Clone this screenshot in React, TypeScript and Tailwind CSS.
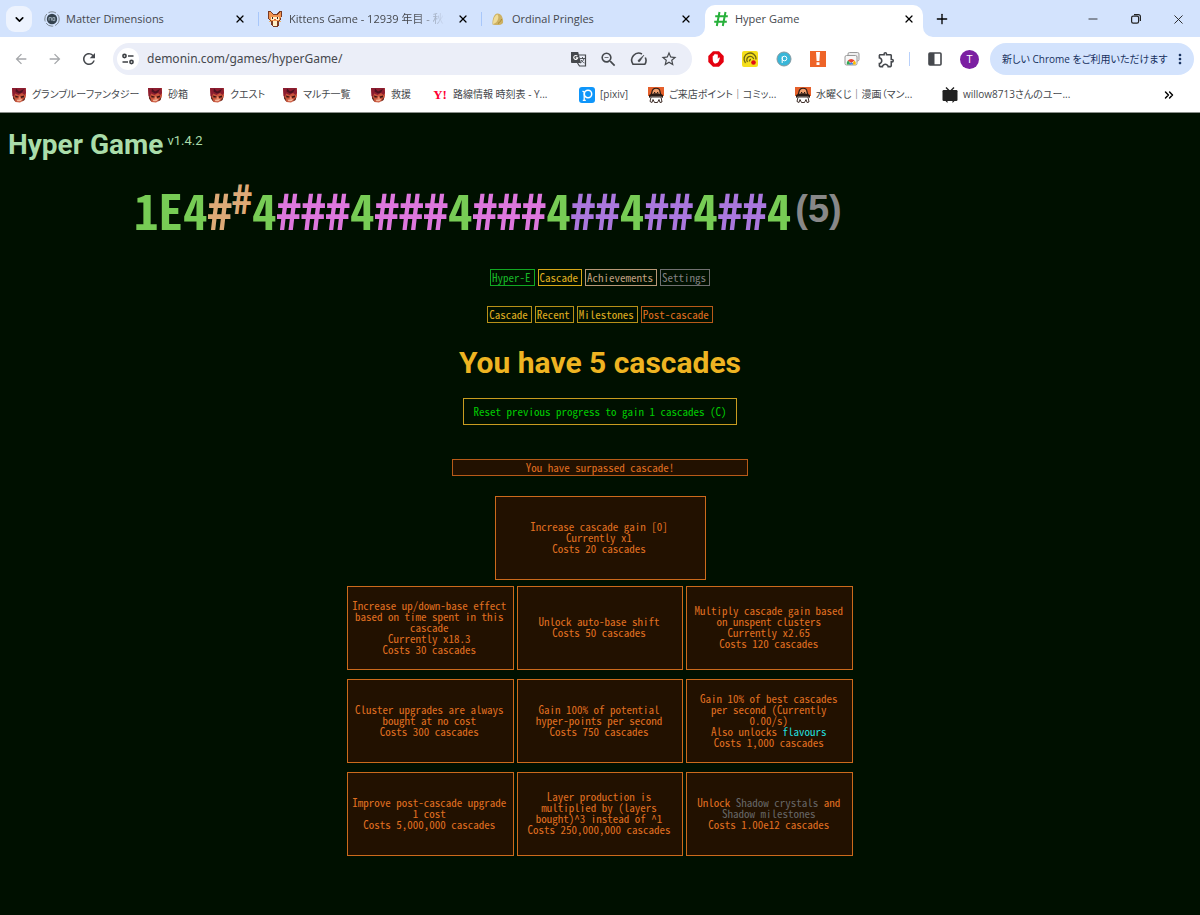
import type { ReactNode } from 'react';
import clsx from 'clsx';
import {
  MdArrowBack,
  MdArrowForward,
  MdMoreVert,
  MdOutlineExtension,
  MdRefresh,
  MdStarBorder,
  MdZoomOut,
} from 'react-icons/md';
import { ChevronDown, ChevronsRight, Minus, Plus, X } from 'lucide-react';

function MatterIcon() {
  return (
    <svg viewBox="0 0 16 16" className="size-4 shrink-0">
      <circle cx="8" cy="8" r="7.2" fill="none" stroke="#7d8790" strokeWidth="1" strokeDasharray="8 2" />
      <circle cx="8" cy="8" r="5.2" fill="#34424e" />
      <path d="M5 9.6V6.6h2.4v3M8.800 6.600h2v3h-2z" fill="none" stroke="#a9b8c4" strokeWidth="0.9" />
    </svg>
  );
}

function KittenIcon() {
  return (
    <svg viewBox="0 0 16 16" className="size-4 shrink-0" shapeRendering="crispEdges">
      <path d="M1 0h3l2 3h4l2-3h3v5l-1 3-2 2v4l-2 2H6l-2-2v-4L2 9 1 6z" fill="#7a3a24" />
      <path d="M2 1h1l3 3h4l3-3h1v5l-1 3-2 1H5L3 9 2 6z" fill="#f09450" />
      <path d="M4 6h8v3H4zM6 10h4v5H6z" fill="#fff0c8" />
      <path d="M5 6h1v2H5zM10 6h1v2h-1z" fill="#3a2018" />
      <path d="M7 8h2v1H7z" fill="#d8553c" />
      <path d="M2 10h2v1H2zM12 10h2v1h-2z" fill="#f0b060" />
    </svg>
  );
}

function PringleIcon() {
  return (
    <svg viewBox="0 0 16 16" className="size-4 shrink-0">
      <path d="M2.500 13.500C2 9 4 2.500 7.500 2.500c4 0 6 5 5.500 9.500-2 2.500-6.500 2.500-10.500 1.500z" fill="#cdb163" />
      <path d="M3 13C3 8 5 4 7.500 3.500c1.500 1.500 1 5-1 7.500-1 1-2.500 1.800-3.500 2z" fill="#f0dc98" />
      <path d="M8 12.500c1.500-1 3-2.500 3.600-4.500" fill="none" stroke="#a9882f" />
    </svg>
  );
}

function HashIcon() {
  return (
    <svg viewBox="0 0 16 16" className="size-4 shrink-0">
      <path d="M6.500 1 3.800 15M12.500 1 9.800 15M2.200 5.300h12.600M1.200 10.700h12.600" fill="none" stroke="#27b03a" strokeWidth="2" />
    </svg>
  );
}

function FantasyIcon() {
  return (
    <svg viewBox="0 0 16 16" className="size-4 shrink-0">
      <path d="M1 1h14v8l-1.500 4L9 15.500 4.500 15 2 11z" fill="#c9553c" />
      <path d="M1 1h13.500l.5 5-1.500 2L11 6 7.500 8 4 6.500 3 10 1.500 9z" fill="#8c1d30" />
      <path d="m5 1.500 3 3 5-2.500-2 3.500-3 1-3.500-2z" fill="#4d1220" />
      <path d="M4 8.600 7.500 9.500v1H4.500zM9.500 9.500l3.500-1v1.700l-3 .8z" fill="#401612" />
      <path d="M8 9.500h1.200l.8 2.500H7.500z" fill="#eb8a68" />
      <path d="m5.500 12.800 6-.8-2 2.300H6.500z" fill="#f3b69a" />
      <path d="M2 9.500 3.500 11l1 4L2 11.500zM12.500 12l1.800-2-.8 3-2.500 1.500z" fill="#5c2c22" />
    </svg>
  );
}

function PixivIcon() {
  return (
    <span className="flex size-4 shrink-0 items-center justify-center rounded-[3px] bg-[#0f96fa]">
      <svg viewBox="0 0 16 16" className="size-4">
        <circle cx="9" cy="7" r="3.700" fill="none" stroke="#fff" strokeWidth="1.500" />
        <path d="M3.500 4.200 5.200 5v8.500M3.800 13.300h3" fill="none" stroke="#fff" strokeWidth="1.300" />
      </svg>
    </span>
  );
}

function YahooIcon() {
  return (
    <span className="w-4 shrink-0 text-center font-['Liberation_Serif',serif] text-[13px] leading-4 font-bold text-[#ff0033]">
      Y!
    </span>
  );
}

function ComicIcon() {
  return (
    <svg viewBox="0 0 16 16" className="size-4 shrink-0">
      <path d="M0 0h16v9H0z" fill="#e5602b" />
      <path d="M4 5c0-5 8-5 8 0l1 3H3z" fill="#f0a070" stroke="#2b1a14" strokeWidth="1.200" />
      <path d="M1 8c4-2.500 10-2.500 14 0v3l-2-1.500H3L1 11z" fill="#2b1a14" />
      <path d="M3 10h10l1 5-2 .5-1-3-1.500 3h-3L5 12.500 4 15.500l-2-1z" fill="#fff" stroke="#2b1a14" strokeWidth="0.900" />
      <path d="M6 5.500h1.200M9 5.500h1.200" stroke="#2b1a14" />
    </svg>
  );
}

function TvIcon() {
  return (
    <svg viewBox="0 0 16 16" className="size-4 shrink-0">
      <path d="M4 .5 7.500 4M12 .5 8.500 4" stroke="#222" strokeWidth="1.400" />
      <rect x="0.500" y="3" width="15" height="11" rx="1.200" fill="#222" />
      <path d="M3 13.500h2.500V16zM10.500 13.500H13L10.500 16z" fill="#222" />
    </svg>
  );
}

function SiteInfoIcon() {
  return (
    <svg viewBox="0 0 14 14" className="size-[14px]" fill="none" stroke="#3c3f43" strokeWidth="1.600">
      <circle cx="3.500" cy="4" r="1.600" />
      <path d="M7 4h5.500M1.500 10H7" />
      <circle cx="10.500" cy="10" r="1.600" />
    </svg>
  );
}

function TranslateIcon() {
  return (
    <svg viewBox="0 0 16 16" className="size-4" fill="none">
      <path d="M7.500 4h7v11H8.500L6.500 12" stroke="#45484d" strokeWidth="1.200" />
      <path d="M9 7.500h5M11.500 6v1.500M13 7.500c-.5 2-2 3.500-3.500 4.500M10.200 9c.8 1.500 2 2.500 3.300 3" stroke="#45484d" strokeWidth="0.900" />
      <path d="M0 1h7.200L10 12H1.200C.5 12 0 11.500 0 11z" fill="#45484d" />
      <path d="M6.300 5.200A2 2 0 1 0 6.700 6.900H4.800" stroke="#fff" strokeWidth="1.100" />
    </svg>
  );
}

function GaugeIcon() {
  return (
    <svg viewBox="0 0 18 18" className="size-[18px]" fill="none" stroke="#45484d" strokeWidth="1.600">
      <path d="M12 4A7 7 0 0 0 3 14.200h12A7 7 0 0 0 15.300 7.500" strokeLinejoin="round" />
      <path d="M8.200 10.200 14 5l-4.200 6.500c-1 .9-2.300-.3-1.600-1.300z" fill="#45484d" strokeWidth="0.500" />
    </svg>
  );
}

function RestoreIcon() {
  return (
    <svg viewBox="0 0 12 12" className="size-3" fill="none" stroke="#222" strokeWidth="1.200">
      <rect x="1.600" y="3.200" width="7" height="7" rx="1.600" />
      <path d="M4 1.600h4.400a2 2 0 0 1 2 2V8" />
    </svg>
  );
}

const extensions: { name: string; icon: ReactNode }[] = [
  {
    name: 'Ad blocker',
    icon: (
      <svg viewBox="0 0 16 16" className="size-4">
        <path d="M5 .3h6L15.700 5v6L11 15.700H5L.3 11V5z" fill="#e4000f" />
        <path
          d="M4.700 8V5.200c0-.9 1.200-.9 1.200 0V4c0-.9 1.300-.9 1.300 0v-.6c0-.9 1.300-.9 1.300 0V4c0-.9 1.300-.9 1.300 0v4l.8-1.200c.6-.8 1.500-.3 1.200.5-.6 1.700-1 3.200-1.900 4.300-.8 1-3 1.100-3.900.3-1-.9-1.300-2.400-1.300-3.900z"
          fill="#fff"
        />
      </svg>
    ),
  },
  {
    name: 'Radar',
    icon: (
      <svg viewBox="0 0 16 16" className="size-4">
        <rect width="16" height="16" rx="2" fill="#f5df1c" />
        <path d="M3.500 12A6 6 0 1 1 14 8.500M5.500 11a3.500 3.500 0 1 1 6.200-2.800" fill="none" stroke="#6d6414" strokeWidth="1.300" />
        <path d="M7.500 10.500a1.500 1.500 0 0 1 1.500-2" fill="none" stroke="#6d6414" strokeWidth="1.300" />
        <circle cx="11.500" cy="11.500" r="2.300" fill="#e10d17" />
      </svg>
    ),
  },
  {
    name: 'Pixiv tool',
    icon: (
      <svg viewBox="0 0 16 16" className="size-4">
        <circle cx="8" cy="8" r="7" fill="#38b6d8" stroke="#8799a0" />
        <circle cx="8.500" cy="7.500" r="2.300" fill="none" stroke="#fff" />
        <path d="M6.200 5.500v6.500" stroke="#fff" />
      </svg>
    ),
  },
  {
    name: 'Alert',
    icon: (
      <svg viewBox="0 0 16 16" className="size-4">
        <path d="M0 0h16v16H0z" fill="#ee6428" />
        <path d="M6 1h4l-.6 9H6.600zM6.500 11.300h3V14h-3z" fill="#fff" />
      </svg>
    ),
  },
  {
    name: 'Screens',
    icon: (
      <svg viewBox="0 0 16 16" className="size-4">
        <rect x="4" y="1.500" width="11" height="8.500" rx="1.500" fill="#eee" stroke="#999" />
        <rect x="1" y="4.500" width="12" height="9.500" rx="1.500" fill="#f7f7f7" stroke="#999" />
        <path d="M2.800 13.500a4.500 4.500 0 0 1 1.300-4.200L7 13.500z" fill="#34a853" />
        <path d="M3.800 9.500a4.500 4.500 0 0 1 6.800 0L7.300 12z" fill="#ea4335" />
        <path d="M10.600 9.500a4.500 4.500 0 0 1 1.200 4H7.500z" fill="#fbbc04" />
        <path d="M5.300 13.500a2 2 0 0 1 4 0z" fill="#4285f4" />
      </svg>
    ),
  },
  { name: 'Extensions', icon: <MdOutlineExtension size={19} /> },
];

const tabs = [
  { title: 'Matter Dimensions', icon: <MatterIcon /> },
  { title: 'Kittens Game - 12939 年目 - 秋季', icon: <KittenIcon />, fade: true },
  { title: 'Ordinal Pringles', icon: <PringleIcon /> },
  { title: 'Hyper Game', icon: <HashIcon />, active: true },
];

const bookmarks = [
  { label: 'グランブルーファンタジー', icon: <FantasyIcon />, width: 'w-[136px]' },
  { label: '砂箱', icon: <FantasyIcon />, width: 'w-[62px]' },
  { label: 'クエスト', icon: <FantasyIcon />, width: 'w-[73px]' },
  { label: 'マルチ一覧', icon: <FantasyIcon />, width: 'w-[88px]' },
  { label: '救援', icon: <FantasyIcon />, width: 'w-[62px]' },
  { label: '路線情報 時刻表 - Y...', icon: <YahooIcon />, width: 'w-[147px]' },
  { label: '[pixiv]', icon: <PixivIcon />, width: 'w-[69px]' },
  { label: 'ご来店ポイント｜コミッ...', icon: <ComicIcon />, width: 'w-[147px]' },
  { label: '水曜くじ｜漫画（マン...', icon: <ComicIcon />, width: 'w-[147px]' },
  { label: 'willow8713さんのユー...', icon: <TvIcon />, width: 'w-[147px]' },
];

function TabStrip() {
  return (
    <div className="flex h-[37px] items-end bg-[#d3e3fd]">
      <button aria-label="Search tabs" className="mb-[5px] ml-1.5 flex size-[26px] items-center justify-center rounded-[9px] bg-[#edf3fe]">
        <ChevronDown size={13} strokeWidth={3} />
      </button>
      <div className="ml-1 flex">
        {tabs.map((tab, i) => (
          <div
            key={tab.title}
            className={clsx(
              'relative flex h-8 items-center pb-1 pl-2',
              tab.active ? 'w-[218px] rounded-t-[10px] bg-white' : 'w-[223px]'
            )}
          >
            {tab.active && (
              <>
                <svg viewBox="0 0 10 10" className="absolute bottom-0 -left-2.5 size-2.5">
                  <path d="M10 0v10H0A10 10 0 0 0 10 0z" fill="#fff" />
                </svg>
                <svg viewBox="0 0 10 10" className="absolute -right-2.5 bottom-0 size-2.5">
                  <path d="M0 0v10h10A10 10 0 0 1 0 0z" fill="#fff" />
                </svg>
              </>
            )}
            {tab.icon}
            <span
              className={clsx(
                'ml-1.5 w-[156px] overflow-hidden text-[11px] whitespace-nowrap text-[#45484d]',
                tab.fade && 'mask-r-from-80%'
              )}
            >
              {tab.title}
            </span>
            <button aria-label={`Close ${tab.title}`} className="ml-2.5 flex size-4 items-center justify-center">
              <X size={12} strokeWidth={2.5} />
            </button>
            {i < 2 && <span className="ml-2.5 h-3.5 w-px bg-[#a8c7fa]" />}
          </div>
        ))}
      </div>
      <button aria-label="New tab" className="mb-2.5 ml-[11px]">
        <Plus size={16} />
      </button>
      <div className="mb-2.5 ml-auto flex text-[#222]">
        <button aria-label="Minimize" className="flex h-4 w-[43px] items-center justify-center">
          <Minus size={14} strokeWidth={1.5} />
        </button>
        <button aria-label="Restore" className="flex h-4 w-[43px] items-center justify-center">
          <RestoreIcon />
        </button>
        <button aria-label="Close window" className="flex h-4 w-[43px] items-center justify-center">
          <X size={15} strokeWidth={1.5} />
        </button>
      </div>
    </div>
  );
}

function Toolbar() {
  return (
    <div className="flex h-11 items-center bg-white pr-1.5 pl-1 text-[#45484d]">
      <button aria-label="Back" className="flex w-[34px] justify-center text-[#a5a7aa]">
        <MdArrowBack size={16} />
      </button>
      <button aria-label="Forward" className="flex w-[34px] justify-center text-[#a5a7aa]">
        <MdArrowForward size={16} />
      </button>
      <button aria-label="Reload" className="flex w-[34px] justify-center">
        <MdRefresh size={18} />
      </button>
      <div className="ml-[7px] flex h-8 flex-1 items-center rounded-full bg-[#ebeef8] pr-3.5 pl-1">
        <button aria-label="Site information" className="flex size-[22px] items-center justify-center rounded-full bg-white">
          <SiteInfoIcon />
        </button>
        <input
          aria-label="Address"
          defaultValue="demonin.com/games/hyperGame/"
          className="ml-2 min-w-0 flex-1 bg-transparent font-['Noto_Sans',sans-serif] text-[12px] text-[#45484d] outline-none"
        />
        <div className="flex items-center gap-3">
          <button aria-label="Translate"><TranslateIcon /></button>
          <button aria-label="Zoom"><MdZoomOut size={19} /></button>
          <button aria-label="Performance"><GaugeIcon /></button>
          <button aria-label="Bookmark"><MdStarBorder size={18} /></button>
        </div>
      </div>
      <div className="ml-[7px] flex">
        {extensions.map((ext) => (
          <button key={ext.name} aria-label={ext.name} className="flex w-[34px] items-center justify-center">
            {ext.icon}
          </button>
        ))}
      </div>
      <span className="ml-1.5 h-3.5 w-px bg-[#b9d1fb]" />
      <button aria-label="Side panel" className="ml-2 flex w-[34px] justify-center">
        <svg viewBox="0 0 16 16" className="size-4">
          <rect x="2" y="2" width="12" height="12" rx="1" fill="none" stroke="currentColor" strokeWidth="1.600" />
          <path d="M2 2h5.500v12H2z" fill="currentColor" />
        </svg>
      </button>
      <button className="ml-2 flex size-[19px] items-center justify-center rounded-full bg-[#7b1fa2] text-[11px] text-white">T</button>
      <button className="ml-[11px] flex h-8 items-center gap-1 rounded-full bg-[#d3e3fd] pr-1.5 pl-3 text-[#16305e]">
        <span className="w-[166px] text-left text-[10px] whitespace-nowrap">新しい Chrome をご利用いただけます</span>
        <MdMoreVert size={16} />
      </button>
    </div>
  );
}

function BookmarksBar() {
  return (
    <div className="flex h-8 items-center border-b border-[#8a8f8a] bg-white pb-1 pl-[11px]">
      {bookmarks.map((mark) => (
        <a key={mark.label} href="#" className={clsx('flex shrink-0 items-center gap-[5px] text-[10px] text-[#45484d]', mark.width)}>
          {mark.icon}
          <span className="whitespace-nowrap">{mark.label}</span>
        </a>
      ))}
      <button aria-label="More bookmarks" className="mr-6 ml-auto">
        <ChevronsRight size={14} strokeWidth={2.5} />
      </button>
    </div>
  );
}

const green = 'text-[#77cc55]';
const tan = 'text-[#ddaa77]';
const pink = 'text-[#dd77dd]';
const purple = 'text-[#aa77dd]';

const numberParts = [
  { text: '4', color: green },
  { text: '###', color: pink },
  { text: '4', color: green },
  { text: '###', color: pink },
  { text: '4', color: green },
  { text: '###', color: pink },
  { text: '4', color: green },
  { text: '##', color: purple },
  { text: '4', color: green },
  { text: '##', color: purple },
  { text: '4', color: green },
  { text: '##', color: purple },
  { text: '4', color: green },
];

const mainTabs = [
  { label: 'Hyper-E', style: 'border-[#11a822] text-[#18b828]' },
  { label: 'Cascade', style: 'border-[#d8a818] text-[#e0b020]' },
  { label: 'Achievements', style: 'border-[#b89878] text-[#c0a080]' },
  { label: 'Settings', style: 'border-[#707070] text-[#808080]' },
];

const subTabs = [
  { label: 'Cascade', style: 'border-[#b89018] text-[#e0b020]' },
  { label: 'Recent', style: 'border-[#b89018] text-[#e0b020]' },
  { label: 'Milestones', style: 'border-[#b89018] text-[#e0b020]' },
  { label: 'Post-cascade', style: 'border-[#b85a18] text-[#e07020]' },
];

const upgrades: ReactNode[][] = [
  ['Increase up/down-base effect', 'based on time spent in this', 'cascade', 'Currently x18.3', 'Costs 30 cascades'],
  ['Unlock auto-base shift', 'Costs 50 cascades'],
  ['Multiply cascade gain based', 'on unspent clusters', 'Currently x2.65', 'Costs 120 cascades'],
  ['Cluster upgrades are always', 'bought at no cost', 'Costs 300 cascades'],
  ['Gain 100% of potential', 'hyper-points per second', 'Costs 750 cascades'],
  [
    'Gain 10% of best cascades',
    'per second (Currently',
    '0.00/s)',
    <>Also unlocks <span className="text-[#22dddd]">flavours</span></>,
    'Costs 1,000 cascades',
  ],
  ['Improve post-cascade upgrade', '1 cost', 'Costs 5,000,000 cascades'],
  ['Layer production is', 'multiplied by (layers', 'bought)^3 instead of ^1', 'Costs 250,000,000 cascades'],
  [
    <>Unlock <span className="text-[#666666]">Shadow crystals</span> and</>,
    <span className="text-[#666666]">Shadow milestones</span>,
    'Costs 1.00e12 cascades',
  ],
];

function TabRow({ items }: { items: { label: string; style: string }[] }) {
  return (
    <nav className="flex justify-center gap-[3px]">
      {items.map((item) => (
        <button key={item.label} className={clsx('border pr-[3px] pl-px leading-[15px]', item.style)}>
          {item.label}
        </button>
      ))}
    </nav>
  );
}

function Upgrade({ lines }: { lines: ReactNode[] }) {
  return (
    <button className="flex h-[84px] flex-col items-center justify-center border border-[#cc6a1c] bg-[#221100] pr-0.5 pb-0.5 leading-[11px] whitespace-nowrap text-[#e07020]">
      {lines.map((line, i) => (
        <span key={i}>{line}</span>
      ))}
    </button>
  );
}

function Game() {
  return (
    <main className="flex-1 bg-[#001000] font-['Noto_Sans_Mono_CJK_JP','Liberation_Mono',monospace] text-[11px]">
      <header className="flex items-start pt-3 pl-2 font-['Roboto',sans-serif] text-[#aaddaa]">
        <h1 className="text-[28px] leading-10 font-bold">Hyper Game</h1>
        <span className="mt-1.5 ml-1 text-[13px] leading-5">v1.4.2</span>
      </header>

      <p className="mt-3 flex h-16 items-center pl-[134px] text-[49px] leading-[64px] font-bold whitespace-nowrap">
        <span className={green}>1E4</span>
        <span className={tan}>#</span>
        <span className={clsx(tan, 'pb-6 text-[40px] leading-10')}>#</span>
        {numberParts.map((part, i) => (
          <span key={i} className={part.color}>{part.text}</span>
        ))}
        <span className="ml-1 font-['Liberation_Sans',sans-serif] text-[38px] text-[#888888]">(5)</span>
      </p>

      <div className="mt-7">
        <TabRow items={mainTabs} />
      </div>
      <div className="mt-5">
        <TabRow items={subTabs} />
      </div>

      <h2 className="mt-5 text-center font-['Roboto',sans-serif] text-[30px] leading-10 font-bold text-[#eeb422]">
        You have 5 cascades
      </h2>

      <button className="mx-auto mt-[15px] block h-[27px] w-[274px] border border-[#c89c20] text-[#00cc00]">
        Reset previous progress to gain 1 cascades (C)
      </button>
      <p className="mx-auto mt-[34px] w-[296px] border border-[#b85a18] bg-[#221100] text-center leading-[15px] text-[#e07020]">
        You have surpassed cascade!
      </p>

      <section className="mx-auto mt-5 flex w-[506px] flex-col gap-1.5">
        <div className="mx-auto grid w-[211px]">
          <Upgrade lines={['Increase cascade gain [0]', 'Currently x1', 'Costs 20 cascades']} />
        </div>
        <div className="grid grid-cols-3 gap-x-[3px] gap-y-[9px]">
          {upgrades.map((lines, i) => (
            <Upgrade key={i} lines={lines} />
          ))}
        </div>
      </section>
    </main>
  );
}

export default function App() {
  return (
    <div className="flex min-h-screen flex-col">
      <div className="font-['Open_Sans','Noto_Sans_CJK_JP',sans-serif] [font-feature-settings:'palt']">
        <TabStrip />
        <Toolbar />
        <BookmarksBar />
      </div>
      <Game />
    </div>
  );
}
